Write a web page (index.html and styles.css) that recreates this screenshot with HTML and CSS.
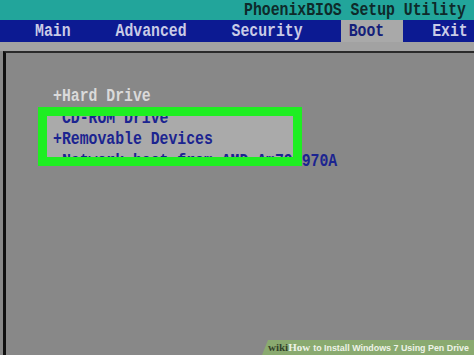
FILE: index.html
```html
<!DOCTYPE html>
<html lang="en">
  <head>
    <meta charset="UTF-8" />
    <meta name="viewport" content="width=device-width, initial-scale=1.0" />
    <title>PhoenixBIOS Setup Utility</title>
    <link rel="stylesheet" href="styles.css">
  </head>
  <body>
    <div class="title"><span class="tall">PhoenixBIOS Setup Utility</span></div>

    <div class="menu">
      <span class="item"><span class="tall">Main</span></span>
      <span class="item"><span class="tall">Advanced</span></span>
      <span class="item"><span class="tall">Security</span></span>
      <span class="item active"><span class="tall">Boot</span></span>
      <span class="item"><span class="tall">Exit</span></span>
    </div>

    <div class="band"></div>

    <div class="screen">
      <div class="boot-list">
        <div class="row light"><span class="tall">+Hard Drive</span></div>
        <div class="row"><span class="tall"> CD-ROM Drive</span></div>
        <div class="row"><span class="tall">+Removable Devices</span></div>
        <div class="row"><span class="tall"> Network boot from AMD Am79C970A</span></div>
      </div>
    </div>

    <!-- wikihow highlight: lighter fill behind text, green frame over it -->
    <div class="hl-fill"></div>
    <div class="hl-frame"></div>

    <div class="watermark">
      <span class="wiki">wiki</span><span class="how">How</span>to Install Windows 7 Using Pen Drive
    </div>
  </body>
</html>
```

FILE: styles.css
```css
body {
  margin: 0;
  width: 474px;
  height: 355px;
  overflow: hidden;
  position: relative;
  background-color: #888888;
  font-family: "Liberation Mono", "DejaVu Sans Mono", monospace;
  font-weight: bold;
  font-size: 14.8px;
}

.tall {
  display: inline-block;
  white-space: pre;
  transform: scaleY(1.3);
}

.title {
  height: 20px;
  line-height: 21px;
  background-color: #22a59b;
  color: #0e2a2a;
  text-align: right;
  padding-right: 8px;
}

.menu {
  display: flex;
  height: 22px;
  line-height: 23px;
  padding-left: 35px;
  background-color: #0c1a92;
  color: #c9cbe6;
}

.item + .item {
  margin-left: 45px;
}

.item.active {
  margin-left: 38px;
  padding: 0 19px 0 8px;
  background-color: #a9a9a9;
  color: #15207a;
}

.item.active + .item {
  margin-left: 29px;
}

.band {
  height: 9px;
  background-color: #a2a2a2;
}

.screen {
  margin-left: 3px;
  height: 302px;
  border-top: 2px solid #2a2a2a;
  border-left: 3px solid #101010;
  background-color: #888888;
}

.boot-list {
  position: relative;
  z-index: 1;
  padding-top: 33px;
  padding-left: 47px;
  color: #1b2490;
}

.row {
  height: 21.5px;
  line-height: 21.5px;
}

.row.light {
  color: #dadada;
}

.hl-fill {
  position: absolute;
  left: 38px;
  top: 107px;
  width: 264px;
  height: 59px;
  background-color: #aaaaaa;
}

.hl-frame {
  position: absolute;
  z-index: 2;
  left: 38px;
  top: 107px;
  width: 246px;
  height: 41px;
  border: 9px solid #1eee22;
}

.watermark {
  position: absolute;
  right: 0;
  bottom: 0;
  width: 206px;
  height: 15px;
  padding-left: 6px;
  line-height: 15px;
  background-color: #8aaa70;
  clip-path: polygon(6px 0, 100% 0, 100% 100%, 0 100%);
  color: #eef3e8;
  font-family: "Liberation Sans", Arial, sans-serif;
  font-size: 8.9px;
  white-space: nowrap;
  overflow: hidden;
}

.watermark .wiki,
.watermark .how {
  font-family: "Liberation Serif", serif;
  font-size: 11px;
  font-weight: bold;
}

.watermark .wiki {
  color: #34432a;
}

.watermark .how {
  margin-right: 3px;
}
```
